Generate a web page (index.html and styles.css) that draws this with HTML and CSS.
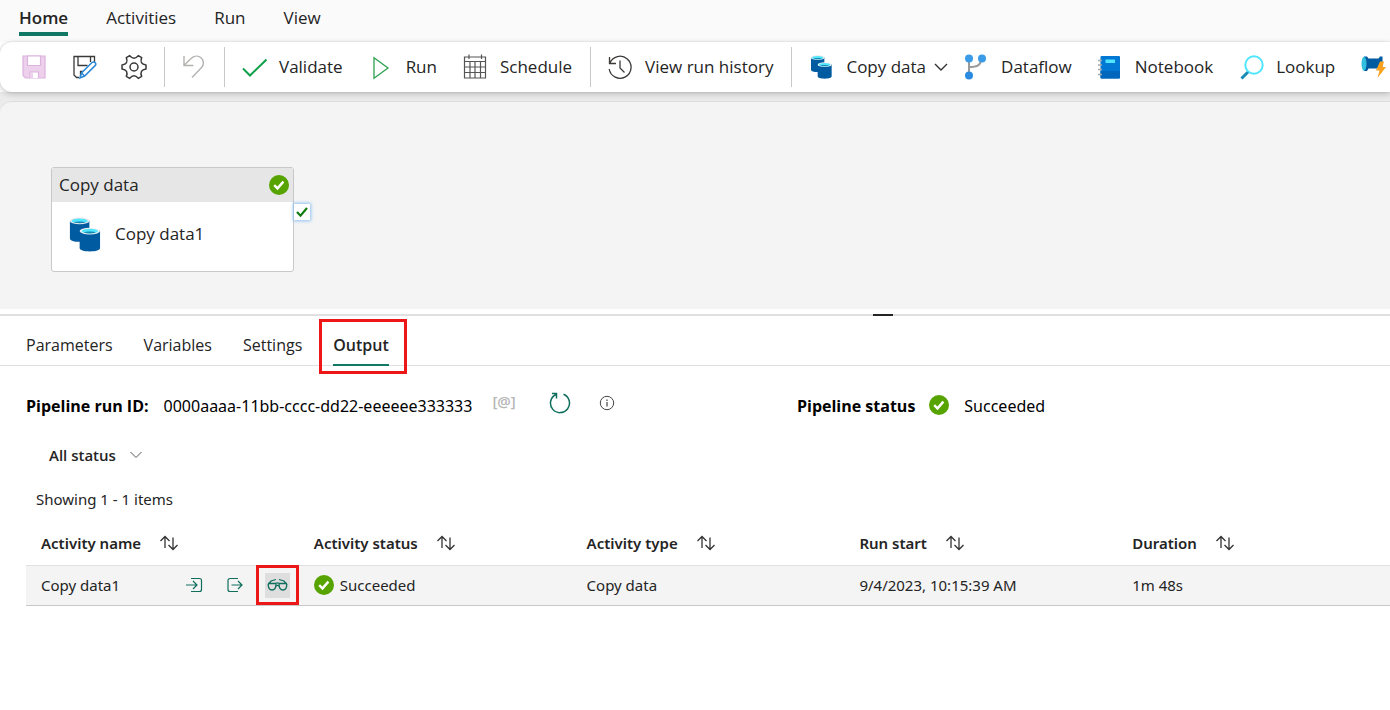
FILE: index.html
```html
<!DOCTYPE html>
<html lang="en">
<head>
  <meta charset="UTF-8" />
  <meta name="viewport" content="width=device-width, initial-scale=1.0"/>
  <title>Pipeline - Output</title>
  <link rel="stylesheet" href="styles.css">
</head>
<body>
  <!-- shared icons -->
  <svg class="sprite" aria-hidden="true">
    <symbol id="ok" viewBox="0 0 20 20">
      <circle cx="10" cy="10" r="10" fill="#57a300"/>
      <path d="M5.2 10.2 8.5 13.4 14.4 6.6" fill="none" stroke="#fff" stroke-width="2.4"/>
    </symbol>
    <symbol id="copy" viewBox="0 0 32 36">
      <path d="M1 3.5V22c0 2.200 4.500 3.500 10 3.500s10-1.300 10-3.500V3.500z" fill="#005ba1"/>
      <ellipse cx="11" cy="4" rx="10.200" ry="3.500" fill="#e8e8e8"/>
      <ellipse cx="11" cy="4" rx="8.200" ry="2.400" fill="#50e6ff"/>
      <path d="M5 5.500c2-1.300 10-1.300 12 0-3 1.200-9 1.200-12 0z" fill="#198ab3"/>
      <path d="M11 14v18c0 2.200 4.500 3.500 10.500 3.500S32 34.200 32 32V14z" fill="#005ba1"/>
      <ellipse cx="21.500" cy="14.500" rx="10.500" ry="3.500" fill="#f2f2f2"/>
      <ellipse cx="21.500" cy="14.500" rx="8.400" ry="2.400" fill="#50e6ff"/>
      <path d="M15.500 16c2-1.300 10-1.300 12 0-3 1.200-9 1.200-12 0z" fill="#198ab3"/>
    </symbol>
    <symbol id="sort" viewBox="0 0 20 16">
      <path d="M6 13V1.500M1.500 6 6 1.500 10.500 6M14 2.500V14.500M9.500 10 14 14.500 18.500 10" fill="none" stroke="#333" stroke-width="1.300"/>
    </symbol>
  </svg>

  <nav class="ribbon-tabs">
    <a href="#" class="ribbon-tab active">Home</a>
    <a href="#" class="ribbon-tab">Activities</a>
    <a href="#" class="ribbon-tab">Run</a>
    <a href="#" class="ribbon-tab">View</a>
  </nav>

  <div class="toolbar">
    <button class="tool icon-only" aria-label="Save" disabled>
      <svg class="tool-icon" viewBox="0 0 26 26">
        <path d="M2 2h22v22H4.500L2 21.500z" fill="#ecd0ec" stroke="#dcb2de" stroke-width="1.200"/>
        <path d="M6.500 2h13v9.500h-13zM9 24v-6h8.500v6" fill="#fff" stroke="#dcb2de" stroke-width="1.200"/>
        <path d="M9.600 18.600h2.400V24H9.600z" fill="#ecd0ec"/>
      </svg>
    </button>
    <button class="tool icon-only" aria-label="Save as">
      <svg class="tool-icon" viewBox="0 0 26 26" fill="none" stroke="#3b3a39" stroke-width="1.300">
        <path d="M23.500 8V2.500H3V21l2.500 2.500H8M7 2.500v9h9.500M19.500 2.500V8M9.500 23v-5.500H13"/>
        <path d="M9 24l1.500-5L21 8.500c1-.9 2.400-.7 3.200.2.700.8.800 2-.1 2.900L13.600 22zM10.500 19l3.100 3" fill="#fff" stroke="#2b88d8" stroke-width="1.500"/>
      </svg>
    </button>
    <button class="tool icon-only" aria-label="Settings">
      <svg class="tool-icon" viewBox="0 0 26 26" fill="none" stroke="#3b3a39" stroke-width="1.500" stroke-linejoin="round">
        <path d="M25 11v4Q18.100 16 20.700 22.400L17.300 24.400Q13 18.900 8.700 24.400L5.300 22.400Q7.900 16 1 15V11Q7.900 10 5.300 3.600L8.700 1.600Q13 7.100 17.300 1.600L20.700 3.600Q18.100 10 25 11z"/>
        <circle cx="13" cy="13" r="4"/>
      </svg>
    </button>
    <span class="separator"></span>
    <button class="tool icon-only" aria-label="Undo" disabled>
      <svg class="tool-icon" viewBox="0 0 26 26" fill="none" stroke="#b5b3b1" stroke-width="1.400">
        <path d="M3 2v9.500h9.500M3.200 11.300l6.600-6.600C13 1.600 17.200 1.200 20 3.800c3.200 3 3.200 7 .3 10L11 23.500"/>
      </svg>
    </button>
    <span class="separator"></span>
    <button class="tool">
      <svg class="tool-icon" viewBox="0 0 26 26" fill="none" stroke="#13a04b" stroke-width="2"><path d="M2 14.500l7 7L25.500 5.500"/></svg>
      Validate
    </button>
    <button class="tool">
      <svg class="tool-icon" viewBox="0 0 26 26" fill="none" stroke="#2ea04f" stroke-width="1.300"><path d="M6 3.800v20.400L20 14z"/></svg>
      Run
    </button>
    <button class="tool">
      <svg class="tool-icon" viewBox="0 0 26 26" fill="none" stroke="#555" stroke-width="1.200">
        <path d="M2.500 3h21v21h-21zM2.500 7.500h21M2.500 13h21M2.500 18.500h21M8 7.500V24M13 7.500V24M18.500 7.500V24M7 .5V5M19.500.5V5"/>
      </svg>
      Schedule
    </button>
    <span class="separator"></span>
    <button class="tool">
      <svg class="tool-icon" viewBox="0 0 26 26" fill="none" stroke="#3b3a39" stroke-width="1.300">
        <path d="M2.500 3v6.500H9M2.800 9.300A11 11 0 1 1 2.200 15M13 6.500v7.500l4.500 4.500"/>
      </svg>
      View run history
    </button>
    <span class="separator"></span>
    <button class="tool dropdown">
      <svg class="tool-icon copy-small"><use href="#copy"/></svg>
      Copy data
      <svg class="chevron" viewBox="0 0 14 14" fill="none" stroke="#333" stroke-width="1.400"><path d="M1 4l6 6 6-6"/></svg>
    </button>
    <button class="tool">
      <svg class="tool-icon" viewBox="0 0 26 26">
        <path d="M6 5v17M18 5c0 7-5 8-12 8" fill="none" stroke="#999" stroke-width="2"/>
        <circle cx="6" cy="4.500" r="4" fill="#3a9be6"/>
        <circle cx="19" cy="4.500" r="4" fill="#3a9be6"/>
        <circle cx="6" cy="21.500" r="4" fill="#2b8be0"/>
      </svg>
      Dataflow
    </button>
    <button class="tool">
      <svg class="tool-icon" viewBox="0 0 26 26">
        <rect x="3.500" y="2" width="19.500" height="22.500" rx="1" fill="#0078d4"/>
        <path d="M3.500 17h19.500v6.500a1 1 0 0 1-1 1H4.500a1 1 0 0 1-1-1z" fill="#0067bc"/>
        <rect x="8.500" y="5.500" width="9.500" height="3.500" fill="#50e6ff"/>
        <path d="M1 6.500h4M1 11h4M1 15.500h4M1 20.500h4" stroke="#a8a8a8" stroke-width="1.600"/>
      </svg>
      Notebook
    </button>
    <button class="tool">
      <svg class="tool-icon" viewBox="0 0 26 26" fill="none">
        <path d="M10.500 17.500L3.500 24.500" stroke="#198ab3" stroke-width="3"/>
        <circle cx="16" cy="11" r="8.700" stroke="#50e6ff" stroke-width="2"/>
      </svg>
      Lookup
    </button>
    <button class="tool" aria-label="Script">
      <svg class="tool-icon" viewBox="0 0 26 26">
        <path d="M4 2.500h3l1.500 2h10l1.500-2h2.500v14H20l-1.500-2h-10L7 17H4z" fill="#005ba1"/>
        <ellipse cx="4" cy="9.700" rx="2.500" ry="7" fill="#32bedd"/>
        <path d="M20 7.500h4l-1.500 5.500H26l-8.500 11 2-7.500h-3.500z" fill="#faa21d"/>
      </svg>
    </button>
  </div>

  <main class="canvas">
    <div class="node">
      <div class="node-title">Copy data <svg class="ok"><use href="#ok"/></svg></div>
      <div class="node-body">
        <svg class="node-icon"><use href="#copy"/></svg>
        Copy data1
      </div>
      <span class="node-port"><svg viewBox="0 0 16 16"><path d="M3 8l3.500 3.700L13 4" fill="none" stroke="#107c10" stroke-width="2.200"/></svg></span>
    </div>
  </main>

  <section class="panel">
    <span class="drag-handle"></span>
    <nav class="panel-tabs">
      <a href="#" class="panel-tab">Parameters</a>
      <a href="#" class="panel-tab">Variables</a>
      <a href="#" class="panel-tab">Settings</a>
      <a href="#" class="panel-tab active highlight">Output</a>
    </nav>

    <div class="run-info">
      <div class="run-cell">
        <b>Pipeline run ID:</b>
        <span class="run-id">0000aaaa-11bb-cccc-dd22-eeeeee333333</span>
        <button class="plain at" aria-label="Copy run ID">[@]</button>
        <button class="plain refresh" aria-label="Refresh">
          <svg width="22" height="22" viewBox="0 0 22 22" fill="none" stroke="#0f6e5c" stroke-width="1.500"><path d="M14.500 2.300A9.500 9.500 0 1 1 7 2.500M3 1.500H7.500v5"/></svg>
        </button>
        <button class="plain" aria-label="Info">
          <svg width="16" height="16" viewBox="0 0 16 16" fill="none" stroke="#444"><circle cx="8" cy="8" r="6.700"/><path d="M8 7v4.500M8 4.500V6" stroke-width="1.200"/></svg>
        </button>
      </div>
      <div class="run-cell">
        <b>Pipeline status</b>
        <svg class="ok"><use href="#ok"/></svg>
        <span>Succeeded</span>
      </div>
    </div>

    <button class="filter">
      All status
      <svg width="12" height="12" viewBox="0 0 12 12" fill="none" stroke="#555"><path d="M.5 3L6 8.500 11.500 3"/></svg>
    </button>
    <p class="count">Showing 1 - 1 items</p>

    <table class="runs">
      <thead>
        <tr>
          <th>Activity name <svg class="sort"><use href="#sort"/></svg></th>
          <th>Activity status <svg class="sort"><use href="#sort"/></svg></th>
          <th>Activity type <svg class="sort"><use href="#sort"/></svg></th>
          <th>Run start <svg class="sort"><use href="#sort"/></svg></th>
          <th>Duration <svg class="sort"><use href="#sort"/></svg></th>
        </tr>
      </thead>
      <tbody>
        <tr>
          <td>
            <div class="name-cell">
              <span>Copy data1</span>
              <div class="row-actions">
                <button class="plain" aria-label="Input">
                  <svg width="18" height="18" viewBox="0 0 18 18" fill="none" stroke="#0f6e5c" stroke-width="1.200"><path d="M6 2.500h8.500a2 2 0 0 1 2 2v9a2 2 0 0 1-2 2H6M1 9h11M8 5l4 4-4 4"/></svg>
                </button>
                <button class="plain" aria-label="Output">
                  <svg width="18" height="18" viewBox="0 0 18 18" fill="none" stroke="#0f6e5c" stroke-width="1.200"><path d="M12 2.500H4a2 2 0 0 0-2 2v9a2 2 0 0 0 2 2h8M5.500 9H16M12 5l4 4-4 4"/></svg>
                </button>
                <button class="plain details highlight" aria-label="Details">
                  <svg width="21" height="14" viewBox="0 0 21 14" fill="none" stroke="#0f6e5c" stroke-width="1.300"><path d="M1.200 6.500L4 3l5-1.500M19.800 6.500L17 3l-5-1.500M1 5.500h7.500c1.300-.8 2.700-.8 4 0H20M9 8c.8-.6 2.200-.6 3 0"/><path d="M1.200 6c0 4 1 6 3.800 6s4-2 4-6M12 6c0 4 1.200 6 4 6s3.800-2 3.800-6"/></svg>
                </button>
              </div>
            </div>
          </td>
          <td><div class="status-cell"><svg class="ok"><use href="#ok"/></svg>Succeeded</div></td>
          <td>Copy data</td>
          <td>9/4/2023, 10:15:39 AM</td>
          <td>1m 48s</td>
        </tr>
      </tbody>
    </table>
  </section>
</body>
</html>
```
FILE: styles.css
```css
* {
  box-sizing: border-box;
  margin: 0;
  padding: 0;
}

body {
  background-color: #fff;
  color: #242424;
  font-family: 'Open Sans', 'Noto Sans', sans-serif;
  font-size: 17px;
  line-height: 24px;
  overflow-x: hidden;
}

button {
  background: none;
  border: none;
  color: inherit;
  font: inherit;
  cursor: pointer;
}

a {
  color: inherit;
  text-decoration: none;
}

svg {
  display: block;
  flex: none;
}

.sprite {
  position: absolute;
  width: 0;
  height: 0;
}

.ok {
  width: 20px;
  height: 20px;
}

/* red frame around the item to click */
.highlight {
  position: relative;
}

.highlight::after {
  content: '';
  position: absolute;
  border: 3px solid #ee1717;
}

/* ribbon */
.ribbon-tabs {
  display: flex;
  gap: 38px;
  height: 42px;
  padding: 6px 19px;
  background-color: #fafafa;
}

.ribbon-tab {
  height: 30px;
}

.ribbon-tab.active {
  font-weight: 600;
  border-bottom: 4px solid #117865;
}

.toolbar {
  position: relative;
  z-index: 1;
  display: flex;
  align-items: center;
  height: 50px;
  padding-left: 9px;
  background-color: #fff;
  border-radius: 12px 0 0 12px;
  box-shadow: 0 0 2px rgba(0, 0, 0, 0.15), 0 2px 6px rgba(0, 0, 0, 0.2);
}

.tool {
  display: flex;
  flex: none;
  align-items: center;
  gap: 12px;
  height: 40px;
  padding: 0 13px 0 12px;
  white-space: nowrap;
}

.tool.icon-only {
  padding: 0 12px;
}

.tool.dropdown {
  gap: 8px;
  padding-right: 3px;
}

.tool-icon {
  width: 26px;
  height: 26px;
}

.copy-small {
  height: 24px;
  margin-right: 4px;
}

.chevron {
  width: 14px;
  height: 14px;
}

.separator {
  flex: none;
  width: 1px;
  height: 40px;
  margin: 0 4px 0 5px;
  background-color: #c8c8c8;
}

/* design canvas */
.canvas {
  position: relative;
  height: 216px;
  background-color: #ebebeb;
  padding-top: 9px;
}

.canvas::before {
  content: '';
  display: block;
  height: 100%;
  background-color: #f4f4f4;
  border-top: 1px solid #dcdcdc;
  border-radius: 12px 0 0 0;
}

.node {
  position: absolute;
  left: 51px;
  top: 75px;
  width: 243px;
  background-color: #fff;
  border: 1px solid #c8c8c8;
  border-radius: 3px;
}

.node-title {
  display: flex;
  align-items: center;
  justify-content: space-between;
  height: 34px;
  padding: 0 4px 0 7px;
  background-color: #e6e6e6;
}

.node-body {
  display: flex;
  align-items: center;
  gap: 14px;
  height: 69px;
  padding: 0 16px 5px;
}

.node-icon {
  width: 33px;
  height: 35px;
}

.node-port {
  position: absolute;
  left: 242px;
  top: 36px;
  width: 16px;
  height: 16px;
  background-color: #fff;
  box-shadow: 0 0 3px 1px #8fc3f0;
}

/* output panel */
.panel {
  position: relative;
  margin-top: 6px;
  border-top: 2px solid #e0e0e0;
  font-size: 16px;
}

.drag-handle {
  position: absolute;
  left: 873px;
  top: -2px;
  width: 20px;
  height: 2px;
  background-color: #242424;
}

.panel-tabs {
  display: flex;
  gap: 31px;
  height: 50px;
  padding: 17px 26px 0;
  border-bottom: 1px solid #e0e0e0;
}

.panel-tab {
  height: 33px;
}

.panel-tab.active {
  font-weight: 600;
  border-bottom: 2px solid #117865;
}

.panel-tab.highlight::after {
  inset: -14px -18px -10px -14px;
}

.run-info {
  display: grid;
  grid-template-columns: 13fr 10fr;
  padding: 26px 0 0 26px;
  color: #000;
}

.run-cell {
  display: flex;
  align-items: center;
}

.run-cell b {
  font-weight: 700;
}

.run-cell span {
  font-family: 'Noto Sans', sans-serif;
}

.run-cell .ok {
  margin: 0 15px 2px 14px;
}

.run-cell .run-id {
  margin-left: 15px;
}

.plain {
  display: flex;
  align-items: center;
  justify-content: center;
}

.at {
  margin-left: 20px;
  padding-bottom: 10px;
  color: #b5b5b5;
  font-size: 15px;
  font-weight: 600;
  line-height: 14px;
}

.refresh {
  margin: 0 28px 6px 33px;
}

.refresh + .plain {
  margin-bottom: 6px;
}

.filter {
  display: flex;
  align-items: center;
  gap: 14px;
  margin: 23px 0 0 49px;
  font-size: 15px;
  font-weight: 600;
}

.count {
  margin: 20px 0 0 36px;
  font-family: 'Noto Sans', sans-serif;
  font-size: 15px;
}

.runs {
  width: calc(100% - 26px);
  margin: 10px 0 0 26px;
  border-collapse: collapse;
  table-layout: fixed;
  font-family: 'Noto Sans', sans-serif;
  font-size: 15px;
}

.runs th,
.runs td {
  padding-left: 15px;
  text-align: left;
  white-space: nowrap;
}

.runs th {
  height: 44px;
  font-weight: 600;
}

.runs td {
  height: 40px;
  background-color: #f4f4f4;
  border-top: 1px solid #e0e0e0;
  border-bottom: 1px solid #c8c8c8;
}

.sort {
  display: inline-block;
  width: 20px;
  height: 16px;
  margin-left: 14px;
  vertical-align: -2px;
}

.name-cell,
.row-actions,
.status-cell {
  display: flex;
  align-items: center;
}

.name-cell {
  justify-content: space-between;
  padding-right: 9px;
}

.row-actions {
  gap: 23px;
}

.status-cell {
  gap: 6px;
}

.details {
  width: 25px;
  height: 25px;
  margin-left: -2px;
  background-color: #dedede;
}

.details::after {
  inset: -8px -9px -7px;
}
```
